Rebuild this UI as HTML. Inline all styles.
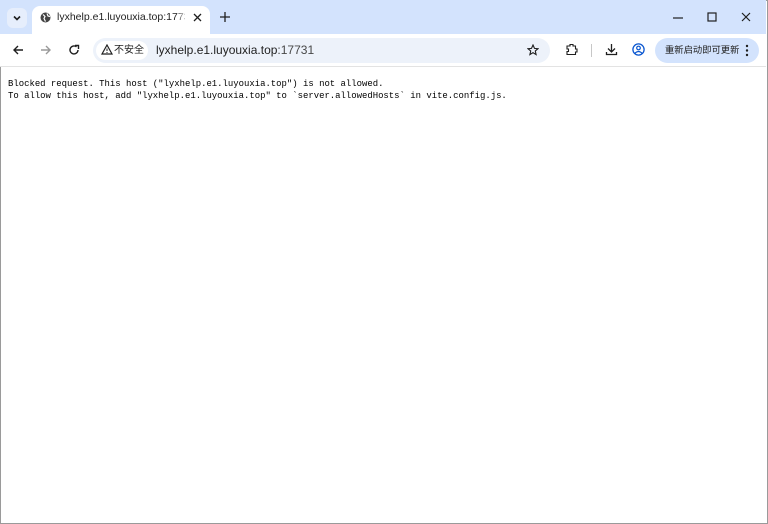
<!DOCTYPE html>
<html><head><meta charset="utf-8"><style>
*{margin:0;padding:0;box-sizing:border-box}
body{width:768px;height:524px;overflow:hidden;background:#fff;font-family:"Liberation Sans","Noto Sans CJK SC",sans-serif;position:relative}
.win{position:absolute;left:0;top:0;width:768px;height:524px;border:1px solid #9a9a9a;}
.tabs{position:absolute;left:0;top:0;width:766px;height:34px;background:#d3e3fd}
.tab{position:absolute;left:32px;top:6px;width:178px;height:28px;background:#fff;border-radius:8px 8px 0 0}
.tb{position:absolute;left:0;top:34px;width:766px;height:33px;background:#fff;border-bottom:1px solid #e3e3e3}
.omni{position:absolute;left:93px;top:38px;width:457px;height:25px;background:#edf2fa;border-radius:13px}
.chip{position:absolute;left:96px;top:41px;width:52px;height:19px;background:#fff;border-radius:10px;font-size:10px;color:#1f1f1f;line-height:19px;padding-left:18px}
.upd{position:absolute;left:655px;top:38px;width:104px;height:25px;background:#d3e3fd;border-radius:13px;font-size:9.3px;color:#1f1f1f;line-height:25px;padding-left:10px;white-space:nowrap}
pre{position:absolute;left:8px;top:78px;font-family:"Liberation Mono",monospace;font-size:8.95px;line-height:12px;color:#000}
svg{position:absolute}
</style></head><body>
<div class="win"></div>
<div class="tabs"></div>
<div style="position:absolute;left:7px;top:8px;width:20px;height:20px;background:#e6eefc;border-radius:6px"></div>
<svg style="left:12px;top:13px" width="10" height="10"><path d="M2 3.5L5 6.5L8 3.5" stroke="#1f1f1f" stroke-width="1.6" fill="none"/></svg>
<div class="tab"></div>
<svg style="left:40px;top:12px" width="11" height="11"><circle cx="5.5" cy="5.5" r="5" fill="#444"/><path d="M3 2.5l2 2-1 2 1.5 3M7 1.5l1 2.5 2 .5" stroke="#fff" stroke-width="1.2" fill="none"/></svg>
<div style="position:absolute;left:57px;top:11px;font-size:10.5px;color:#1f1f1f;width:128px;overflow:hidden;white-space:nowrap">lyxhelp.e1.luyouxia.top:17731</div>
<div style="position:absolute;left:176px;top:8px;width:12px;height:18px;background:linear-gradient(90deg,rgba(255,255,255,0),#fff)"></div>
<svg style="left:193px;top:13px" width="9" height="9"><path d="M1 1L8 8M8 1L1 8" stroke="#1f1f1f" stroke-width="1.3"/></svg>
<svg style="left:220px;top:12px" width="10" height="10"><path d="M5 0V10M0 5H10" stroke="#1f1f1f" stroke-width="1.3"/></svg>
<svg style="left:673px;top:17px" width="10" height="2"><path d="M0 1H10" stroke="#1f1f1f" stroke-width="1.2"/></svg>
<svg style="left:707px;top:12px" width="10" height="10"><rect x="1" y="1" width="8" height="8" stroke="#1f1f1f" stroke-width="1.2" fill="none"/></svg>
<svg style="left:741px;top:12px" width="10" height="10"><path d="M1 1L9 9M9 1L1 9" stroke="#1f1f1f" stroke-width="1.2"/></svg>
<div class="tb"></div>
<svg style="left:13px;top:45px" width="11" height="10"><path d="M10 5H1.5M5 1L1 5L5 9" stroke="#1f1f1f" stroke-width="1.4" fill="none"/></svg>
<svg style="left:40px;top:45px" width="11" height="10"><path d="M1 5H9.5M6 1L10 5L6 9" stroke="#9a9a9a" stroke-width="1.4" fill="none"/></svg>
<svg style="left:68px;top:44px" width="12" height="12"><path d="M10 6A4 4 0 1 1 8.5 2.8" stroke="#1f1f1f" stroke-width="1.4" fill="none"/><path d="M7 1.5H10.5V5" stroke="#1f1f1f" stroke-width="1.4" fill="none"/></svg>
<div class="omni"></div>
<div class="chip">不安全</div>
<svg style="left:101px;top:44px" width="12" height="11"><path d="M6 1L11 10H1Z" stroke="#1f1f1f" stroke-width="1.2" fill="none"/><path d="M6 4.5V7M6 8V9" stroke="#1f1f1f" stroke-width="1"/></svg>
<div style="position:absolute;left:156px;top:43px;font-size:12px;color:#1f1f1f">lyxhelp.e1.luyouxia.top<span style="color:#474747">:17731</span></div>
<svg style="left:527px;top:44px" width="12" height="12"><path d="M6 1L7.5 4.4L11 4.7L8.3 7L9.1 10.6L6 8.7L2.9 10.6L3.7 7L1 4.7L4.5 4.4Z" stroke="#1f1f1f" stroke-width="1.1" fill="none"/></svg>
<svg style="left:565px;top:43px" width="13" height="13"><path d="M2 3H5V1.5H8V3H10.5V6H12V9H10.5V11.5H2V8.5H3.5V6H2Z" stroke="#1f1f1f" stroke-width="1.1" fill="none"/></svg>
<div style="position:absolute;left:591px;top:44px;width:1px;height:13px;background:#c7c7c7"></div>
<svg style="left:605px;top:43px" width="13" height="13"><path d="M6.5 1V8.5M3 5.5L6.5 9L10 5.5M1.5 9V11.5H11.5V9" stroke="#1f1f1f" stroke-width="1.3" fill="none"/></svg>
<svg style="left:632px;top:43px" width="13" height="13"><circle cx="6.5" cy="6.5" r="5.6" stroke="#0b57d0" stroke-width="1.3" fill="none"/><circle cx="6.5" cy="5" r="1.8" stroke="#0b57d0" stroke-width="1.2" fill="none"/><path d="M3 10.2Q6.5 6.8 10 10.2" stroke="#0b57d0" stroke-width="1.2" fill="none"/></svg>
<div class="upd">重新启动即可更新</div>
<svg style="left:745px;top:44px" width="4" height="13"><circle cx="2" cy="2" r="1.2" fill="#1f1f1f"/><circle cx="2" cy="6.5" r="1.2" fill="#1f1f1f"/><circle cx="2" cy="11" r="1.2" fill="#1f1f1f"/></svg>
<pre>Blocked request. This host ("lyxhelp.e1.luyouxia.top") is not allowed.
To allow this host, add "lyxhelp.e1.luyouxia.top" to `server.allowedHosts` in vite.config.js.</pre>
</body></html>
